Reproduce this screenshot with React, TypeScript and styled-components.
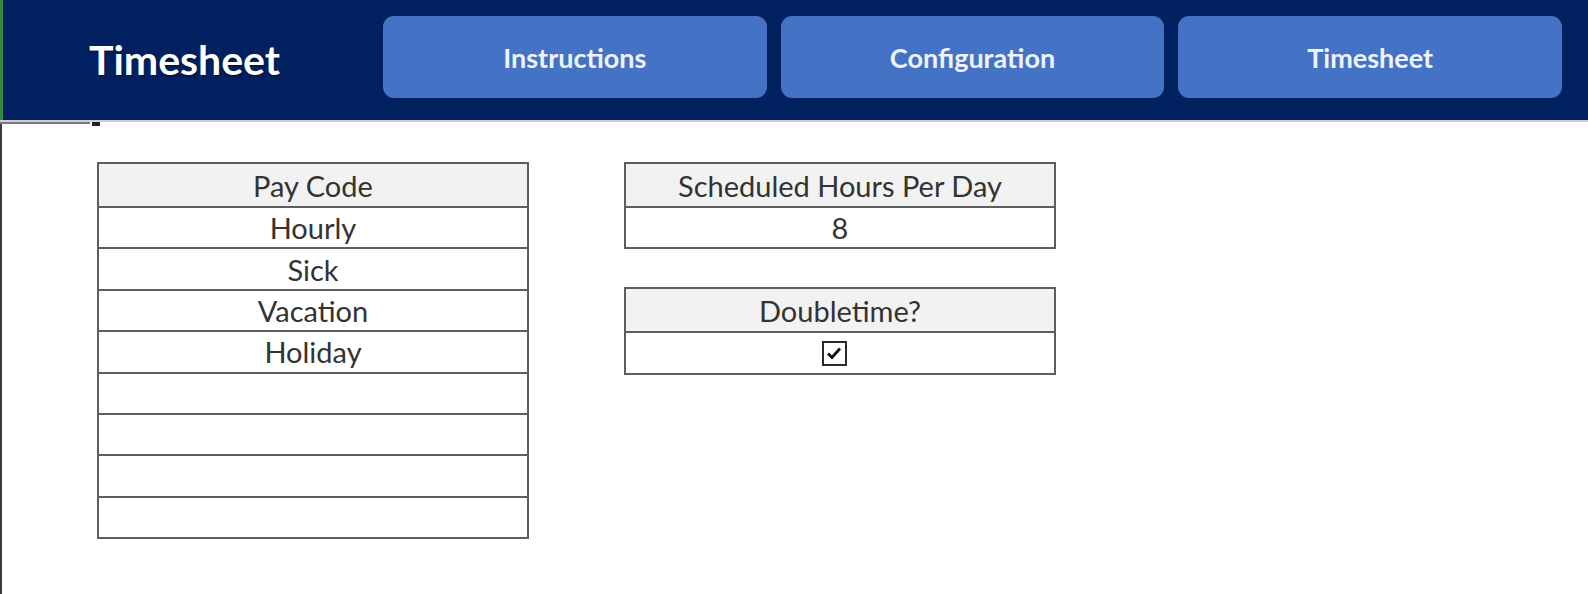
import React from 'react';
import styled, { createGlobalStyle } from 'styled-components';

const GlobalStyle = createGlobalStyle`
  html, body {
    margin: 0;
    padding: 0;
    background: #ffffff;
  }
  body {
    font-family: Lato, "Liberation Sans", Arial, sans-serif;
  }
`;

const colors = {
  navy: '#002060',
  accent: '#4472c4',
  line: '#5e5e5e',
  headFill: '#f2f2f2',
  text: '#333333',
};

const Page = styled.div`
  width: 1588px;
  height: 594px;
  overflow: hidden;
  background: #ffffff;
`;

const Header = styled.header`
  height: 120px;
  box-sizing: border-box;
  background: ${colors.navy};
  border-left: 3px solid #2f8a43;
  display: grid;
  grid-template-columns: 366px 1fr 1fr 1fr;
  column-gap: 14px;
  align-items: start;
  padding: 16px 26px 0 0;
`;

const Title = styled.h1`
  margin: 0;
  align-self: center;
  margin-top: -18px;
  padding-left: 86px;
  font-size: 41px;
  font-weight: 700;
  color: #ffffff;
  text-shadow: 0 1px 2px rgba(0, 0, 0, 0.6);
`;

const NavButton = styled.button`
  height: 82px;
  border: none;
  border-radius: 11px;
  background: ${colors.accent};
  color: #eef3ff;
  font-family: Lato, "Liberation Sans", Arial, sans-serif;
  font-size: 27px;
  font-weight: 700;
  cursor: pointer;
  padding: 0;
`;

const Divider = styled.div`
  height: 2px;
  background: #c9ced8;
  position: relative;
  &::after {
    content: '';
    position: absolute;
    left: 0;
    top: 2px;
    width: 90px;
    height: 2px;
    background: #7a7a7a;
  }
  &::before {
    content: '';
    position: absolute;
    left: 92px;
    top: 2px;
    width: 8px;
    height: 4px;
    background: #222;
  }
`;

const Sheet = styled.main`
  box-sizing: border-box;
  height: 472px;
  border-left: 2px solid #3a3a3a;
  padding: 40px 0 0 95px;
  display: flex;
  align-items: flex-start;
  gap: 95px;
`;

const Stack = styled.div`
  display: flex;
  flex-direction: column;
  gap: 38px;
`;

const Table = styled.div`
  width: 432px;
  box-sizing: border-box;
  border: 2px solid ${colors.line};
  color: ${colors.text};
  font-size: 29px;
`;

const Cell = styled.div<{ $head?: boolean }>`
  height: ${(p) => (p.$head ? '42px' : '39.4px')};
  display: flex;
  align-items: center;
  justify-content: center;
  background: ${(p) => (p.$head ? colors.headFill : '#ffffff')};
  border-bottom: 2px solid ${colors.line};
  &:last-child {
    border-bottom: none;
  }
`;

const CheckBox = styled.span`
  width: 25px;
  height: 25px;
  box-sizing: border-box;
  border: 2px solid #2a2a2a;
  display: inline-flex;
  align-items: center;
  justify-content: center;
  background: #fff;
  margin-left: -12px;
`;

const payCodes = ['Hourly', 'Sick', 'Vacation', 'Holiday', '', '', '', ''];

export default function App() {
  return (
    <Page>
      <GlobalStyle />
      <Header>
        <Title>Timesheet</Title>
        <NavButton>Instructions</NavButton>
        <NavButton>Configuration</NavButton>
        <NavButton>Timesheet</NavButton>
      </Header>
      <Divider />
      <Sheet>
        <Table>
          <Cell $head>Pay Code</Cell>
          {payCodes.map((code, i) => (
            <Cell key={i}>{code}</Cell>
          ))}
        </Table>
        <Stack>
          <Table>
            <Cell $head>Scheduled Hours Per Day</Cell>
            <Cell>8</Cell>
          </Table>
          <Table>
            <Cell $head>Doubletime?</Cell>
            <Cell>
              <CheckBox>
                <svg width="16" height="14" viewBox="0 0 16 14">
                  <path d="M2 7.5 L6 11.5 L14 2.5" fill="none" stroke="#111" strokeWidth="2.8" strokeLinejoin="miter" />
                </svg>
              </CheckBox>
            </Cell>
          </Table>
        </Stack>
      </Sheet>
    </Page>
  );
}
